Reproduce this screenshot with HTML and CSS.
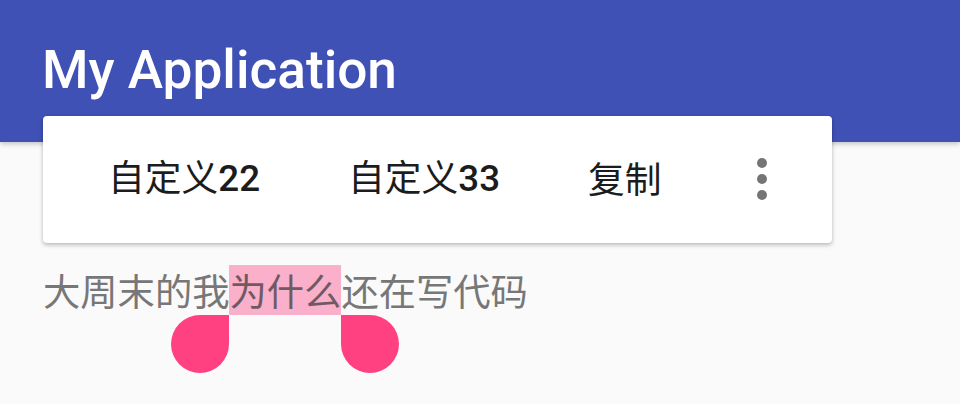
FILE: index.html
```html
<!DOCTYPE html>
<html lang="zh">
<head>
<meta charset="utf-8">
<title>My Application</title>
<link rel="stylesheet" href="styles.css">
</head>
<body>
<header class="appbar">
  <h1 class="title">My Application</h1>
</header>
<main class="content">
  <p class="line">大周末的我<span class="sel">为什么<span class="handle handle-left"></span><span class="handle handle-right"></span></span>还在写代码</p>
</main>
<div class="toolbar">
  <span class="item">自定义<span class="num">22</span></span>
  <span class="item">自定义<span class="num">33</span></span>
  <span class="item">复制</span>
  <span class="more"><i class="dot"></i><i class="dot"></i><i class="dot"></i></span>
</div>
</body>
</html>
```
FILE: styles.css
```css
html, body {
  margin: 0;
  padding: 0;
}
body {
  width: 960px;
  height: 404px;
  overflow: hidden;
  background: #fafafa;
  position: relative;
  font-family: Roboto, "Noto Sans CJK SC", sans-serif;
}
.appbar {
  height: 142px;
  box-sizing: border-box;
  background: #3f51b5;
  padding: 40px 0 0 42px;
  box-shadow: 0 2px 5px rgba(0, 0, 0, 0.22);
  position: relative;
  z-index: 1;
}
.title {
  margin: 0;
  color: #fff;
  font-family: Roboto, sans-serif;
  font-weight: 500;
  font-size: 53.2px;
  line-height: 61px;
}
.content {
  padding: 123px 0 0 43px;
}
.line {
  margin: 0;
  font-family: "Noto Sans CJK SC", sans-serif;
  font-size: 37.3px;
  line-height: 50px;
  height: 50px;
  color: #777777;
  white-space: nowrap;
}
.sel {
  display: inline-block;
  position: relative;
  height: 50px;
  line-height: 50px;
  vertical-align: top;
  background: #fab0ca;
  color: #6f5a63;
}
.handle {
  position: absolute;
  top: 50px;
  width: 58px;
  height: 58px;
  background: #ff4081;
}
.handle-left {
  left: -58px;
  border-radius: 50% 0 50% 50%;
}
.handle-right {
  right: -58px;
  border-radius: 0 50% 50% 50%;
}
.toolbar {
  position: absolute;
  top: 116px;
  left: 43px;
  width: 789px;
  height: 127px;
  box-sizing: border-box;
  padding-left: 65px;
  background: #fff;
  border-radius: 4px;
  box-shadow: 0 2px 4px rgba(0, 0, 0, 0.25), 0 0 2px rgba(0, 0, 0, 0.08);
  display: flex;
  align-items: center;
  z-index: 2;
}
.item {
  font-family: "Noto Sans CJK SC", sans-serif;
  font-weight: 400;
  font-size: 36.75px;
  color: #1c1c1c;
  margin-right: 88px;
  margin-bottom: 5px;
  line-height: 1;
  white-space: nowrap;
}
.item:nth-child(3) {
  margin-right: 95px;
}
.num {
  font-family: Roboto, sans-serif;
  font-weight: 500;
}
.more {
  display: flex;
  flex-direction: column;
  gap: 6px;
  margin-bottom: 2px;
}
.dot {
  display: block;
  width: 10px;
  height: 10px;
  border-radius: 50%;
  background: #757575;
}
```
